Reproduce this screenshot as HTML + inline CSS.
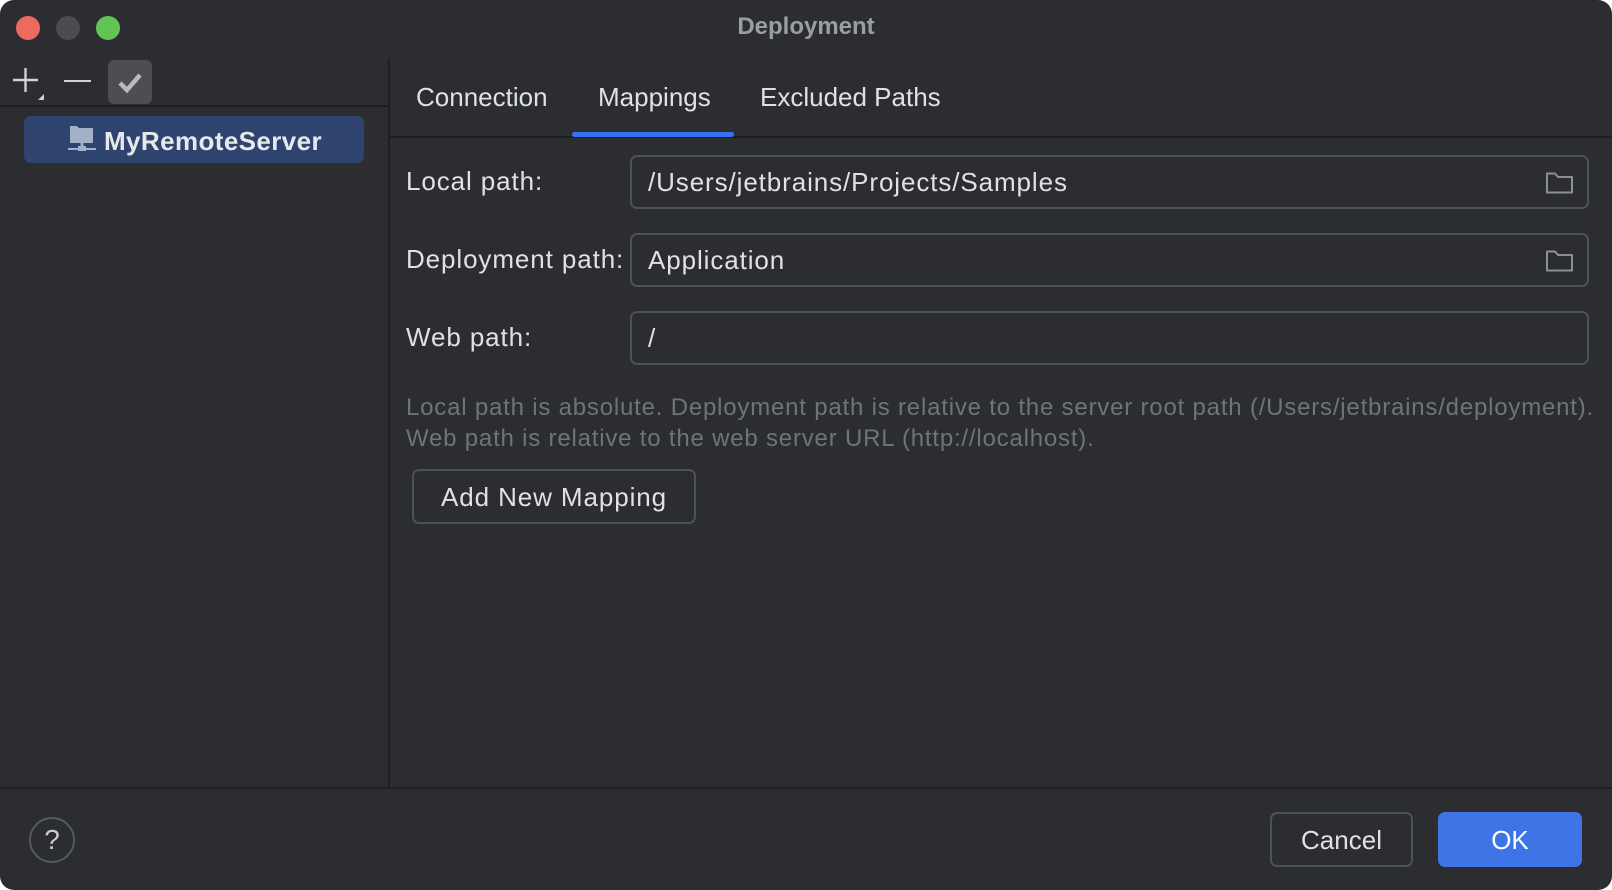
<!DOCTYPE html>
<html><head><meta charset="utf-8"><style>
*{margin:0;padding:0;box-sizing:border-box}
body{width:1612px;height:890px;background:#fff;overflow:hidden;font-family:"Liberation Sans",sans-serif;color:#dfe1e5}
.win{position:absolute;left:0;top:0;width:1612px;height:890px;background:#2b2d30;border-radius:14px;overflow:hidden}
.abs{position:absolute}
.tl{position:absolute;top:16px;width:24px;height:24px;border-radius:50%}
.t{position:absolute;font-size:26px;white-space:nowrap;line-height:30px}
.ls{letter-spacing:0.9px}
.field{position:absolute;left:630px;width:959px;height:54px;border:2px solid #4e5157;border-radius:7px;background:#2b2d30}
.field span{position:absolute;left:16px;top:10px;font-size:26px;line-height:30px;color:#dfe1e5;letter-spacing:0.9px}
.fold{position:absolute;right:12px;top:14px}
</style></head><body>
<div class="win">
<div class="tl" style="left:16px;background:#ed6a5e"></div>
<div class="tl" style="left:56px;background:#4a4b4d"></div>
<div class="tl" style="left:96px;background:#61c554"></div>
<div class="t" style="left:0;width:1612px;text-align:center;top:12px;font-weight:bold;font-size:24px;color:#9a9da1">Deployment</div>

<svg class="abs" style="left:10px;top:64px" width="40" height="40"><path d="M3 16H28M15.5 4V28" stroke="#d0d2d6" stroke-width="2.4"/><path d="M34 30L34 36L28 36Z" fill="#d0d2d6"/></svg>
<div class="abs" style="left:64px;top:80px;width:27px;height:2px;background:#d0d2d6"></div>
<div class="abs" style="left:108px;top:60px;width:44px;height:44px;background:#4c4e52;border-radius:6px"></div>
<svg class="abs" style="left:108px;top:60px" width="44" height="44"><path d="M12 23L19 30L32 15" stroke="#b8babe" stroke-width="4.5" fill="none"/></svg>
<div class="abs" style="left:0;top:105px;width:389px;height:2px;background:#1e1f22"></div>
<div class="abs" style="left:388px;top:58px;width:2px;height:730px;background:#1e1f22"></div>
<div class="abs" style="left:24px;top:116px;width:340px;height:47px;background:#2e436e;border-radius:7px"></div>
<svg class="abs" style="left:67px;top:124px" width="32" height="32"><path d="M3 2H10L12 4H26V19H3Z" fill="#a2b1c9"/><rect x="13.5" y="19" width="3" height="6" fill="#a2b1c9"/><rect x="1" y="24" width="28" height="2" fill="#a2b1c9"/><rect x="11" y="22" width="8" height="5" fill="#a2b1c9"/></svg>
<div class="t" style="left:104px;top:126px;font-weight:bold;font-size:26px;letter-spacing:0.4px;color:#e6e8ec">MyRemoteServer</div>

<div class="t" style="left:416px;top:82px">Connection</div>
<div class="t" style="left:598px;top:82px">Mappings</div>
<div class="t" style="left:760px;top:82px">Excluded Paths</div>
<div class="abs" style="left:390px;top:136px;width:1222px;height:2px;background:#1e1f22"></div>
<div class="abs" style="left:572px;top:132px;width:162px;height:5px;background:#3574f0;border-radius:3px"></div>

<div class="t ls" style="left:406px;top:166px">Local path:</div>
<div class="t ls" style="left:406px;top:244px">Deployment path:</div>
<div class="t ls" style="left:406px;top:322px">Web path:</div>
<div class="field" style="top:155px"><span>/Users/jetbrains/Projects/Samples</span><svg class="fold" width="30" height="24"><path d="M2 2.5H10L13 6H27V21.5H2Z" fill="none" stroke="#8c8f94" stroke-width="2" stroke-linejoin="round"/></svg></div>
<div class="field" style="top:233px"><span>Application</span><svg class="fold" width="30" height="24"><path d="M2 2.5H10L13 6H27V21.5H2Z" fill="none" stroke="#8c8f94" stroke-width="2" stroke-linejoin="round"/></svg></div>
<div class="field" style="top:311px"><span>/</span></div>
<div class="t" style="left:406px;top:392px;font-size:24px;letter-spacing:0.8px;color:#6f737a;line-height:31px">Local path is absolute. Deployment path is relative to the server root path (/Users/jetbrains/deployment).<br>Web path is relative to the web server URL (http://localhost).</div>
<div class="abs" style="left:412px;top:469px;width:284px;height:55px;border:2px solid #4e5157;border-radius:7px"></div>
<div class="t ls" style="left:412px;width:284px;text-align:center;top:482px">Add New Mapping</div>

<div class="abs" style="left:0;top:787px;width:1612px;height:2px;background:#1e1f22"></div>
<div class="abs" style="left:29px;top:817px;width:46px;height:46px;border:2px solid #55585d;border-radius:50%"></div>
<div class="t" style="left:29px;width:46px;text-align:center;top:825px;font-size:28px;color:#c9cbcf">?</div>
<div class="abs" style="left:1270px;top:812px;width:143px;height:55px;border:2px solid #4e5157;border-radius:7px"></div>
<div class="t" style="left:1270px;width:143px;text-align:center;top:825px">Cancel</div>
<div class="abs" style="left:1438px;top:812px;width:144px;height:55px;background:#3f74e6;border-radius:7px"></div>
<div class="t" style="left:1438px;width:144px;text-align:center;top:825px;color:#fff">OK</div>
</div>
</body></html>
